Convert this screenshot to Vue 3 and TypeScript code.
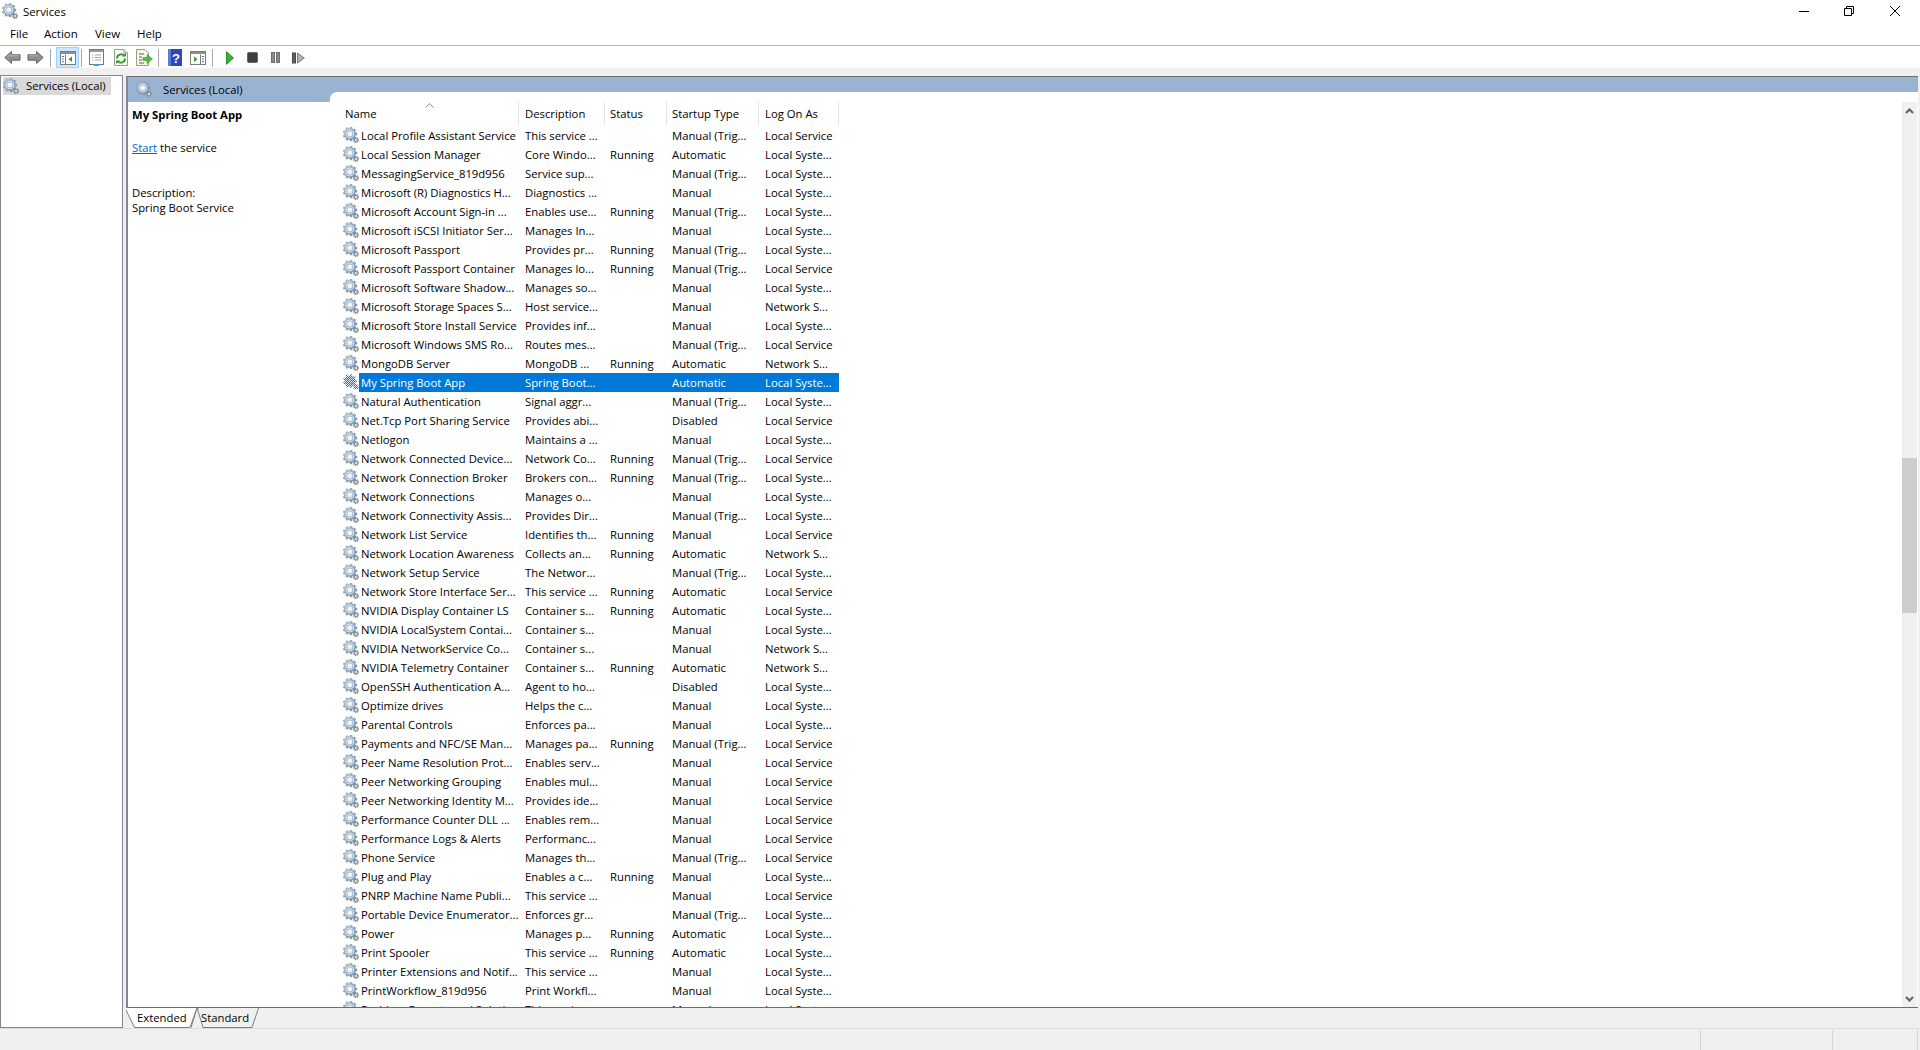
<script setup lang="ts">
type Svc = [string, string, string, string, string]

function gearPath(cx: number, cy: number, ro: number, ri: number, teeth: number): string {
  const pts: string[] = []
  const step = (Math.PI * 2) / teeth
  for (let i = 0; i < teeth; i++) {
    const a = i * step
    const list: [number, number][] = [
      [a - step * 0.32, ri],
      [a - step * 0.18, ro],
      [a + step * 0.18, ro],
      [a + step * 0.32, ri],
    ]
    for (const [t, r] of list) {
      pts.push(`${(cx + Math.cos(t) * r).toFixed(2)} ${(cy + Math.sin(t) * r).toFixed(2)}`)
    }
  }
  return 'M' + pts.join('L') + 'Z'
}

const bigGear = gearPath(7, 7, 7, 5.6, 9)
const smallGear = gearPath(13, 13, 3, 2.1, 7)

const services: Svc[] = [
  ['Local Profile Assistant Service', 'This service ...', '', 'Manual (Trig...', 'Local Service'],
  ['Local Session Manager', 'Core Windo...', 'Running', 'Automatic', 'Local Syste...'],
  ['MessagingService_819d956', 'Service sup...', '', 'Manual (Trig...', 'Local Syste...'],
  ['Microsoft (R) Diagnostics H...', 'Diagnostics ...', '', 'Manual', 'Local Syste...'],
  ['Microsoft Account Sign-in ...', 'Enables use...', 'Running', 'Manual (Trig...', 'Local Syste...'],
  ['Microsoft iSCSI Initiator Ser...', 'Manages In...', '', 'Manual', 'Local Syste...'],
  ['Microsoft Passport', 'Provides pr...', 'Running', 'Manual (Trig...', 'Local Syste...'],
  ['Microsoft Passport Container', 'Manages lo...', 'Running', 'Manual (Trig...', 'Local Service'],
  ['Microsoft Software Shadow...', 'Manages so...', '', 'Manual', 'Local Syste...'],
  ['Microsoft Storage Spaces S...', 'Host service...', '', 'Manual', 'Network S...'],
  ['Microsoft Store Install Service', 'Provides inf...', '', 'Manual', 'Local Syste...'],
  ['Microsoft Windows SMS Ro...', 'Routes mes...', '', 'Manual (Trig...', 'Local Service'],
  ['MongoDB Server', 'MongoDB ...', 'Running', 'Automatic', 'Network S...'],
  ['My Spring Boot App', 'Spring Boot...', '', 'Automatic', 'Local Syste...'],
  ['Natural Authentication', 'Signal aggr...', '', 'Manual (Trig...', 'Local Syste...'],
  ['Net.Tcp Port Sharing Service', 'Provides abi...', '', 'Disabled', 'Local Service'],
  ['Netlogon', 'Maintains a ...', '', 'Manual', 'Local Syste...'],
  ['Network Connected Device...', 'Network Co...', 'Running', 'Manual (Trig...', 'Local Service'],
  ['Network Connection Broker', 'Brokers con...', 'Running', 'Manual (Trig...', 'Local Syste...'],
  ['Network Connections', 'Manages o...', '', 'Manual', 'Local Syste...'],
  ['Network Connectivity Assis...', 'Provides Dir...', '', 'Manual (Trig...', 'Local Syste...'],
  ['Network List Service', 'Identifies th...', 'Running', 'Manual', 'Local Service'],
  ['Network Location Awareness', 'Collects an...', 'Running', 'Automatic', 'Network S...'],
  ['Network Setup Service', 'The Networ...', '', 'Manual (Trig...', 'Local Syste...'],
  ['Network Store Interface Ser...', 'This service ...', 'Running', 'Automatic', 'Local Service'],
  ['NVIDIA Display Container LS', 'Container s...', 'Running', 'Automatic', 'Local Syste...'],
  ['NVIDIA LocalSystem Contai...', 'Container s...', '', 'Manual', 'Local Syste...'],
  ['NVIDIA NetworkService Co...', 'Container s...', '', 'Manual', 'Network S...'],
  ['NVIDIA Telemetry Container', 'Container s...', 'Running', 'Automatic', 'Network S...'],
  ['OpenSSH Authentication A...', 'Agent to ho...', '', 'Disabled', 'Local Syste...'],
  ['Optimize drives', 'Helps the c...', '', 'Manual', 'Local Syste...'],
  ['Parental Controls', 'Enforces pa...', '', 'Manual', 'Local Syste...'],
  ['Payments and NFC/SE Man...', 'Manages pa...', 'Running', 'Manual (Trig...', 'Local Service'],
  ['Peer Name Resolution Prot...', 'Enables serv...', '', 'Manual', 'Local Service'],
  ['Peer Networking Grouping', 'Enables mul...', '', 'Manual', 'Local Service'],
  ['Peer Networking Identity M...', 'Provides ide...', '', 'Manual', 'Local Service'],
  ['Performance Counter DLL ...', 'Enables rem...', '', 'Manual', 'Local Service'],
  ['Performance Logs & Alerts', 'Performanc...', '', 'Manual', 'Local Service'],
  ['Phone Service', 'Manages th...', '', 'Manual (Trig...', 'Local Service'],
  ['Plug and Play', 'Enables a c...', 'Running', 'Manual', 'Local Syste...'],
  ['PNRP Machine Name Publi...', 'This service ...', '', 'Manual', 'Local Service'],
  ['Portable Device Enumerator...', 'Enforces gr...', '', 'Manual (Trig...', 'Local Syste...'],
  ['Power', 'Manages p...', 'Running', 'Automatic', 'Local Syste...'],
  ['Print Spooler', 'This service ...', 'Running', 'Automatic', 'Local Syste...'],
  ['Printer Extensions and Notif...', 'This service ...', '', 'Manual', 'Local Syste...'],
  ['PrintWorkflow_819d956', 'Print Workfl...', '', 'Manual', 'Local Syste...'],
  ['Problem Reports and Soluti...', 'This service ...', '', 'Manual', 'Local Syste...'],
]
const selected = 'My Spring Boot App'
const menus = ['File', 'Action', 'View', 'Help']
</script>

<template>
  <div class="app">
    <svg class="defs" aria-hidden="true">
      <defs>
        <linearGradient id="gearFill" x1="0" y1="0" x2="1" y2="1">
          <stop offset="0" stop-color="#c6d3e1" />
          <stop offset="0.55" stop-color="#90a5bd" />
          <stop offset="1" stop-color="#6c85a2" />
        </linearGradient>
        <radialGradient id="gearHole" cx="0.4" cy="0.4" r="0.7">
          <stop offset="0" stop-color="#ffffff" />
          <stop offset="0.7" stop-color="#dfeaf5" />
          <stop offset="1" stop-color="#a9c2db" />
        </radialGradient>
        <pattern id="selDither" width="2" height="2" patternUnits="userSpaceOnUse">
          <rect width="2" height="2" fill="#e8f1fa" />
          <rect width="1" height="1" fill="#0078d7" />
          <rect x="1" y="1" width="1" height="1" fill="#0078d7" />
        </pattern>
        <symbol id="gear" viewBox="0 0 17 17">
          <path :d="smallGear" fill="#94989d" stroke="#75797d" stroke-width="0.3" />
          <circle cx="13" cy="13" r="1" fill="#f2f2f2" />
          <path :d="bigGear" fill="url(#gearFill)" stroke="#688299" stroke-width="0.35" />
          <circle cx="7" cy="7" r="4.3" fill="#f3f6f9" />
          <circle cx="7" cy="7" r="3.2" fill="url(#gearHole)" stroke="#86a2c1" stroke-width="0.8" />
        </symbol>
        <symbol id="gearSel" viewBox="0 0 17 17">
          <path :d="smallGear" fill="url(#selDither)" />
          <path :d="bigGear" fill="url(#selDither)" />
          <circle cx="7" cy="7" r="3" fill="#0078d7" />
          <circle cx="7" cy="7" r="3" fill="url(#selDither)" />
        </symbol>
      </defs>
    </svg>

    <header class="titlebar">
      <svg class="ico16 title-ico"><use href="#gear" /></svg>
      <span class="title">Services</span>
      <div class="winctl">
        <button class="winbtn" aria-label="Minimize">
          <svg width="10" height="10" viewBox="0 0 10 10"><path d="M0 5.5H10" stroke="#000" fill="none" /></svg>
        </button>
        <button class="winbtn" aria-label="Restore">
          <svg width="10" height="10" viewBox="0 0 10 10"><path d="M.5 2.5H7.5V9.5H.5ZM2.5 2.5V.5H9.5V7.5H7.5" stroke="#000" fill="none" /></svg>
        </button>
        <button class="winbtn" aria-label="Close">
          <svg width="10" height="10" viewBox="0 0 10 10"><path d="M0 0L10 10M10 0L0 10" stroke="#000" fill="none" /></svg>
        </button>
      </div>
    </header>

    <nav class="menubar">
      <span v-for="m in menus" :key="m" class="menu">{{ m }}</span>
    </nav>

    <div class="toolbar">
      <span class="tb">
        <svg width="17" height="15" viewBox="0 0 17 15"><path d="M.8 7.5L7.5 1.5V4.8H16V10.2H7.5V13.5Z" fill="#8f8f8f" stroke="#646464" /><path d="M3 7.5L6.8 4V5.8H15" fill="none" stroke="#b5b5b5" /></svg>
      </span>
      <span class="tb">
        <svg width="17" height="15" viewBox="0 0 17 15"><path d="M16.2 7.5L9.5 1.5V4.8H1V10.2H9.5V13.5Z" fill="#8f8f8f" stroke="#646464" /><path d="M2 5.8H10.2V4" fill="none" stroke="#b5b5b5" /></svg>
      </span>
      <i class="sep s1"></i>
      <span class="tb active">
        <svg width="16" height="14" viewBox="0 0 16 14">
          <rect x=".5" y=".5" width="15" height="13" fill="#fff" stroke="#7d7d7d" />
          <rect x="1" y="1" width="14" height="2" fill="#8e8e8e" />
          <path d="M5.5 3.5V13.5" stroke="#7d7d7d" />
          <path d="M2 5.5H4M2 8H4M2 10.5H4" stroke="#3a7fc1" />
          <path d="M12 5.5V11L8.5 8.2Z" fill="#2aa22a" />
        </svg>
      </span>
      <i class="sep s2"></i>
      <span class="tb">
        <svg width="15" height="17" viewBox="0 0 15 17">
          <rect x=".5" y=".5" width="14" height="15" fill="#fff" stroke="#777" />
          <rect x="1" y="1" width="13" height="2" fill="#9a9a9a" />
          <path d="M3 6H4.5M6 6H12M3 8.5H4.5M6 8.5H12M3 11H4.5M6 11H12" stroke="#8da7c4" />
          <rect x="5" y="15" width="5" height="2" fill="#27a3e8" />
        </svg>
      </span>
      <span class="tb nudge">
        <svg width="14" height="17" viewBox="0 0 14 17">
          <path d="M.5 .5H10L13.5 4V16.5H.5Z" fill="#fbfbf6" stroke="#9a9a9a" />
          <path d="M10 .5V4H13.5" fill="#e2e2e2" stroke="#9a9a9a" />
          <path d="M3 9.5A4 4 0 0 1 10.2 7" fill="none" stroke="#2f9e2f" stroke-width="2" />
          <path d="M8 7.5H12V3.8Z" fill="#2f9e2f" />
          <path d="M11 9.5A4 4 0 0 1 3.8 12" fill="none" stroke="#2f9e2f" stroke-width="2" />
          <path d="M6 11.5H2V15Z" fill="#2f9e2f" />
        </svg>
      </span>
      <span class="tb nudge">
        <svg width="17" height="17" viewBox="0 0 17 17">
          <path d="M.5 .5H9L12.5 4V16.5H.5Z" fill="#fbf7e6" stroke="#9a9a8c" />
          <path d="M3 5H8M3 8H6M3 11H6M3 14H8" stroke="#5a5a5a" />
          <path d="M7 8.5H11V5.5L16.5 10L11 14.5V11.5H7Z" fill="#58b947" stroke="#3d9c32" stroke-width=".6" />
        </svg>
      </span>
      <i class="sep s3"></i>
      <span class="tb">
        <svg width="14" height="17" viewBox="0 0 14 17">
          <rect width="14" height="17" fill="#2b47b8" />
          <rect x="0" y="0" width="3" height="17" fill="#5a78d8" />
          <text x="8" y="13.5" class="help-q">?</text>
        </svg>
      </span>
      <span class="tb">
        <svg width="16" height="14" viewBox="0 0 16 14">
          <rect x=".5" y=".5" width="15" height="13" fill="#fff" stroke="#7d7d7d" />
          <rect x="1" y="1" width="14" height="2" fill="#8e8e8e" />
          <path d="M10.5 3.5V13.5" stroke="#7d7d7d" />
          <path d="M12 5.5H14M12 8H14M12 10.5H14" stroke="#3a7fc1" />
          <path d="M4 5.5V11L7.5 8.2Z" fill="#2aa22a" />
        </svg>
      </span>
      <i class="sep s4"></i>
      <span class="tb first-ctl">
        <svg width="8" height="14" viewBox="0 0 8 14"><path d="M.5 .8L7.5 7L.5 13.2Z" fill="#35b82f" stroke="#1f8f1f" /></svg>
      </span>
      <span class="tb">
        <svg width="11" height="11" viewBox="0 0 11 11"><rect x=".5" y=".5" width="10" height="10" rx="1" fill="#3f3f3f" stroke="#6a6a6a" /></svg>
      </span>
      <span class="tb">
        <svg width="9" height="11" viewBox="0 0 9 11"><rect x=".5" y=".5" width="3" height="10" fill="#8a8a8a" stroke="#6f6f6f" /><rect x="5.5" y=".5" width="3" height="10" fill="#8a8a8a" stroke="#6f6f6f" /></svg>
      </span>
      <span class="tb">
        <svg width="13" height="12" viewBox="0 0 13 12"><rect x=".5" y="1" width="3" height="10" fill="#5f5f5f" stroke="#4a4a4a" /><path d="M5.5 1L12.3 6L5.5 11Z" fill="#b3b3b3" stroke="#7b7b7b" /></svg>
      </span>
    </div>

    <div class="workspace">
      <aside class="tree">
        <div class="tree-item">
          <svg class="ico16"><use href="#gear" /></svg>
          <span class="tree-label">Services (Local)</span>
        </div>
      </aside>

      <main class="main">
        <div class="pane">
          <div class="banner">
            <svg class="ico16"><use href="#gear" /></svg>
            <span class="banner-label">Services (Local)</span>
          </div>
          <div class="content">
            <section class="details">
              <h1 class="svc-title">My Spring Boot App</h1>
              <p class="start"><a class="link">Start</a> the service</p>
              <p class="desc">Description:<br />Spring Boot Service</p>
            </section>
            <section class="listarea">
              <div class="table">
                <div class="thead">
                  <div class="th name-th"><span>Name</span>
                    <svg class="sort" width="9" height="5" viewBox="0 0 9 5"><path d="M.5 4.5L4.5 .7L8.5 4.5" fill="none" stroke="#8a8a8a" /></svg>
                  </div>
                  <div class="th pl6">Description</div>
                  <div class="th pl5">Status</div>
                  <div class="th pl5">Startup Type</div>
                  <div class="th pl6">Log On As</div>
                </div>
                <div class="tbody">
                  <div v-for="s in services" :key="s[0]" class="row" :class="{ sel: s[0] === selected }">
                    <div class="cell name-cell">
                      <svg class="ico16 row-ico"><use :href="s[0] === selected ? '#gearSel' : '#gear'" /></svg>
                      <span class="name-text">{{ s[0] }}</span>
                    </div>
                    <div class="cell pl6 fill">{{ s[1] }}</div>
                    <div class="cell pl5 fill">{{ s[2] }}</div>
                    <div class="cell pl5 fill">{{ s[3] }}</div>
                    <div class="cell pl6 fill">{{ s[4] }}</div>
                  </div>
                </div>
              </div>
              <div class="scrollbar">
                <div class="sb-btn">
                  <svg width="9" height="6" viewBox="0 0 9 6"><path d="M1 5L4.5 1.5L8 5" fill="none" stroke="#606060" stroke-width="2" /></svg>
                </div>
                <div class="sb-track"><div class="sb-thumb"></div></div>
                <div class="sb-btn">
                  <svg width="9" height="6" viewBox="0 0 9 6"><path d="M1 1L4.5 4.5L8 1" fill="none" stroke="#606060" stroke-width="2" /></svg>
                </div>
              </div>
            </section>
          </div>
        </div>
        <div class="tabs">
          <svg class="tab-shape" width="140" height="20" viewBox="0 0 140 20">
            <path d="M-1 0L8.5 19.5H64L71 0Z" fill="#fff" />
            <path d="M-1 0L8.5 19.5H64L71 0" fill="none" stroke="#7d7d7d" />
            <path d="M71 0L65 19.5M71 0L73 0M71.5 1L77 19.5H126L132.5 0" fill="none" stroke="#7d7d7d" />
          </svg>
          <span class="tab tab-ext">Extended</span>
          <span class="tab tab-std">Standard</span>
        </div>
      </main>
    </div>

    <footer class="status">
      <i class="st-sep a"></i>
      <i class="st-sep b"></i>
      <i class="st-sep c"></i>
    </footer>
  </div>
</template>

<style>
html, body { margin: 0; padding: 0; background: #f0f0f0; }
</style>

<style scoped>
.app {
  width: 1920px;
  height: 1050px;
  display: flex;
  flex-direction: column;
  overflow: hidden;
  background: #f0f0f0;
  color: #000;
  font-family: "Open Sans", "Noto Sans", "Liberation Sans", sans-serif;
  font-size: 11.3px;
  letter-spacing: 0;
}
.defs { position: absolute; width: 0; height: 0; }
.ico16 { width: 17px; height: 17px; flex: none; display: block; }

.titlebar { height: 22px; flex: none; display: flex; align-items: center; background: #fff; }
.title-ico { margin-left: 2px; }
.title { margin-left: 4px; font-size: 11.3px; }
.winctl { margin-left: auto; margin-right: 2px; display: flex; height: 22px; }
.winbtn { width: 46px; height: 22px; padding: 0; border: 0; background: transparent; display: flex; align-items: center; justify-content: center; }
.winbtn:nth-child(1) { padding-left: 2px; }

.menubar { height: 23px; flex: none; display: flex; align-items: center; background: #fff; border-bottom: 1px solid #b4b4b4; }
.menu { font-size: 11.5px; }
.menu:nth-child(1) { margin-left: 10px; width: 34px; }
.menu:nth-child(2) { width: 51px; }
.menu:nth-child(3) { width: 42px; }

.toolbar { height: 22px; flex: none; display: flex; align-items: center; background: #fff; padding: 1px 0 0 1px; box-sizing: border-box; }
.tb { width: 23px; height: 21px; flex: none; display: flex; align-items: center; justify-content: center; box-sizing: border-box; }
.tb.active { background: #cce8ff; border: 1px solid #99d1ff; }
.tb.nudge { margin-left: 1px; }
.sep { width: 1px; height: 18px; background: #a8a8a8; flex: none; }
.s1 { margin: 0 5px 0 3px; }
.s2 { margin: 0 3px 0 2px; }
.s3 { margin: 0 4px 0 2px; }
.s4 { margin: 0 3px 0 3px; }
.first-ctl { margin-left: 3px; width: 22px; }
.help-q { font-family: "Liberation Sans", sans-serif; font-weight: 700; font-size: 13px; fill: #fff; text-anchor: middle; }

.workspace { flex: 1; min-height: 0; display: flex; padding-top: 7px; gap: 3px; }
.tree { width: 123px; box-sizing: border-box; background: #fff; border: 1px solid #828790; padding: 1px 0 0 2px; flex: none; }
.tree-item { width: 108px; height: 18px; margin-top: 0; background: #d9d9d9; display: flex; align-items: center; }
.tree-label { margin-left: 6px; margin-top: -1px; }

.main { flex: 1; min-width: 0; display: flex; flex-direction: column; margin: 1px 2px 0 0; }
.pane { flex: 1; min-height: 0; display: flex; flex-direction: column; background: #fff; border-top: 1px solid #6d6d6d; border-left: 2px solid #828790; border-bottom: 1px solid #6d6d6d; }
.banner { height: 25px; flex: none; display: flex; align-items: center; padding: 0 0 0 8px; box-sizing: border-box; background: #9ab3d2; }
.banner-label { margin-left: 10px; }
.content { flex: 1; min-height: 0; display: flex; }
.details { width: 202px; flex: none; padding-left: 4px; box-sizing: border-box; }
.svc-title { margin: 5px 0 0; font-size: 11.3px; font-weight: 700; line-height: 16px; }
.start { margin: 17px 0 0; line-height: 16px; }
.link { color: #0066cc; text-decoration: underline; }
.desc { margin: 29px 0 0; line-height: 15px; }

.listarea { flex: 1; min-width: 0; margin-top: -10px; padding: 10px 1px 0 8px; display: flex; background: #fff; border-top-left-radius: 7px; position: relative; }
.table { flex: 1; min-width: 0; overflow: hidden; }
.thead { display: grid; grid-template-columns: 181px 86px 62px 92px 80px; height: 24px; width: 501px; position: relative; }
.th { height: 23px; line-height: 23px; border-right: 1px solid #e5e5e5; }
.name-th { padding-left: 7px; }
.sort { position: absolute; left: 87px; top: 1px; }
.pl6 { padding-left: 6px; }
.pl5 { padding-left: 5px; }
.tbody { width: 501px; }
.row { display: grid; grid-template-columns: 181px 86px 62px 92px 80px; height: 19px; line-height: 19px; }
.cell { white-space: nowrap; overflow: hidden; }
.name-cell { display: flex; padding-left: 5px; align-items: center; }
.row-ico { margin-right: -1px; }
.name-text { flex: 1; padding-left: 2px; height: 19px; }
.row.sel .name-text, .row.sel .fill { background: #0078d7; color: #fff; }

.scrollbar { width: 15px; flex: none; display: flex; flex-direction: column; background: #f0f0f0; }
.sb-btn { height: 17px; flex: none; display: flex; align-items: center; justify-content: center; }
.sb-track { flex: 1; min-height: 0; }
.sb-thumb { height: 155px; margin-top: 339px; background: #cdcdcd; }

.tabs { height: 20px; flex: none; display: flex; position: relative; }
.tab-shape { position: absolute; left: 0; top: 0; }
.tab { position: relative; line-height: 20px; }
.tab-ext { margin-left: 11px; width: 64px; }

.status { height: 22px; flex: none; display: flex; border-top: 1px solid #dcdcdc; box-sizing: border-box; position: relative; }
.st-sep { width: 1px; height: 20px; margin-top: 1px; background: #d6d6d6; flex: none; }
.st-sep.a { margin-left: 1700px; }
.st-sep.b { margin-left: 131px; }
.st-sep.c { margin-left: 84px; }
</style>
